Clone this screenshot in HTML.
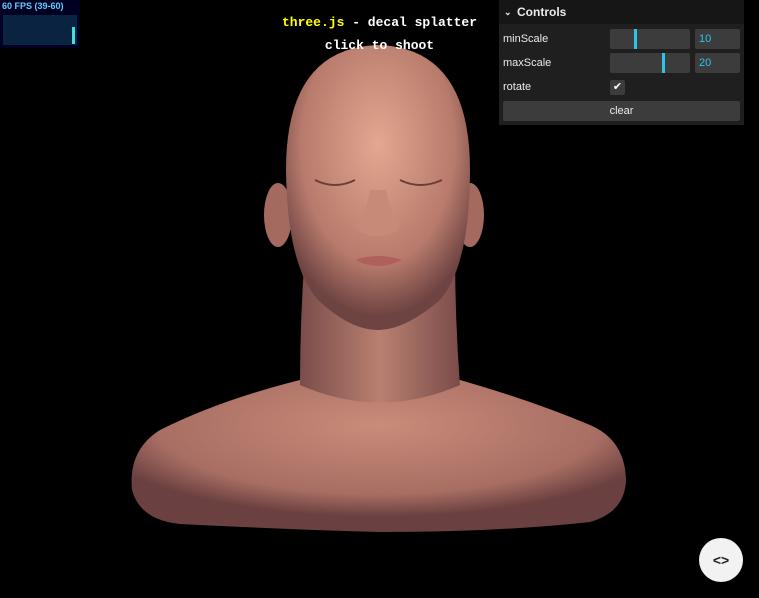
<!DOCTYPE html>
<html><head><style>
body{margin:0;width:759px;height:598px;background:#000;overflow:hidden;position:relative;font-family:"Liberation Sans",sans-serif}
.t{position:absolute;left:0;width:759px;text-align:center;font-family:"Liberation Mono",monospace;font-weight:bold;font-size:13px;color:#fff}
.fps{position:absolute;left:0;top:0;width:80px;height:48px;background:#002;}
.fps span{position:absolute;left:2px;top:1px;font-size:9px;font-weight:bold;color:#6cf}
.fps .g{position:absolute;left:3px;top:15px;width:74px;height:30px;background:#0a2340}
.fps .b{position:absolute;left:72px;top:27px;width:3px;height:17px;background:#4dd}
.p{position:absolute;left:499px;top:0;width:245px;height:125px;background:#1f1f1f;font-size:11px;color:#ebebeb}
.p .h{height:24px;line-height:24px;padding-left:18px;font-weight:bold;font-size:12px;background:#161616}
.row{position:absolute;left:4px;height:20px;line-height:20px}
.sl{position:absolute;left:111px;width:80px;height:20px;background:#3c3c3c;border-radius:2px}
.sl i{position:absolute;top:0;width:3px;height:20px;background:#2cc3ee}
.nb{position:absolute;left:196px;width:45px;height:20px;background:#3c3c3c;border-radius:2px;color:#2cc3ee;line-height:20px;text-indent:4px}
</style></head><body>
<svg width="759" height="598" style="position:absolute;left:0;top:0">
<defs>
<radialGradient id="s" cx="50%" cy="35%" r="60%"><stop offset="0" stop-color="#e2a890"/><stop offset="0.7" stop-color="#b77a6c"/><stop offset="1" stop-color="#6e4442"/></radialGradient>
<radialGradient id="b" cx="50%" cy="30%" r="60%"><stop offset="0" stop-color="#c98c7a"/><stop offset="0.75" stop-color="#a86e63"/><stop offset="1" stop-color="#6a4040"/></radialGradient>
<linearGradient id="n" x1="0" x2="1"><stop offset="0" stop-color="#7a4c4a"/><stop offset="0.5" stop-color="#b98070"/><stop offset="1" stop-color="#7a4c4a"/></linearGradient>
</defs>
<path d="M300 380 Q220 400 160 430 Q128 450 132 490 Q140 520 180 524 Q300 530 380 532 Q500 532 590 522 Q625 512 626 480 Q625 440 590 425 Q530 400 460 380 Z" fill="url(#b)"/>
<path d="M305 250 Q300 320 300 385 Q380 420 460 385 Q455 320 455 250 Z" fill="url(#n)"/>
<ellipse cx="278" cy="215" rx="14" ry="32" fill="#a46a60"/>
<ellipse cx="470" cy="215" rx="14" ry="32" fill="#a46a60"/>
<path d="M378 45 Q470 48 470 170 Q470 265 440 300 Q405 330 378 330 Q350 330 318 300 Q287 265 286 170 Q286 48 378 45 Z" fill="url(#s)"/>
<path d="M315 180 Q335 190 355 180 M400 180 Q420 190 442 180" stroke="#6b3c3a" stroke-width="2" fill="none"/>
<path d="M370 190 Q366 215 355 225 Q360 236 378 236 Q396 236 400 225 Q390 215 386 190" fill="#c88a78"/>
<path d="M355 260 Q378 252 402 260 Q378 272 355 260 Z" fill="#b0605a"/>
</svg>
<div class="fps"><span>60 FPS (39-60)</span><div class="g"></div><div class="b"></div></div>
<div class="t" style="top:15px"><span style="color:#ff0">three.js</span> - decal splatter</div>
<div class="t" style="top:38px">click to shoot</div>
<div class="p">
<div class="h"><span style="position:absolute;left:5px;font-size:9px">&#8964;</span>Controls</div>
<div class="row" style="top:29px">minScale</div><div class="sl" style="top:29px"><i style="left:24px"></i></div><div class="nb" style="top:29px">10</div>
<div class="row" style="top:53px">maxScale</div><div class="sl" style="top:53px"><i style="left:52px"></i></div><div class="nb" style="top:53px">20</div>
<div class="row" style="top:77px">rotate</div><div style="position:absolute;left:111px;top:80px;width:15px;height:15px;background:#3c3c3c;border-radius:2px;color:#fff;font-size:11px;text-align:center;line-height:15px">✔</div>
<div style="position:absolute;left:4px;top:101px;width:237px;height:20px;background:#3c3c3c;border-radius:2px;text-align:center;line-height:20px">clear</div>
</div>
<div style="position:absolute;left:699px;top:538px;width:44px;height:44px;border-radius:50%;background:#f2f2f2;text-align:center;line-height:44px;font-size:14px;font-weight:bold;color:#222">&lt;&gt;</div>
</body></html>
